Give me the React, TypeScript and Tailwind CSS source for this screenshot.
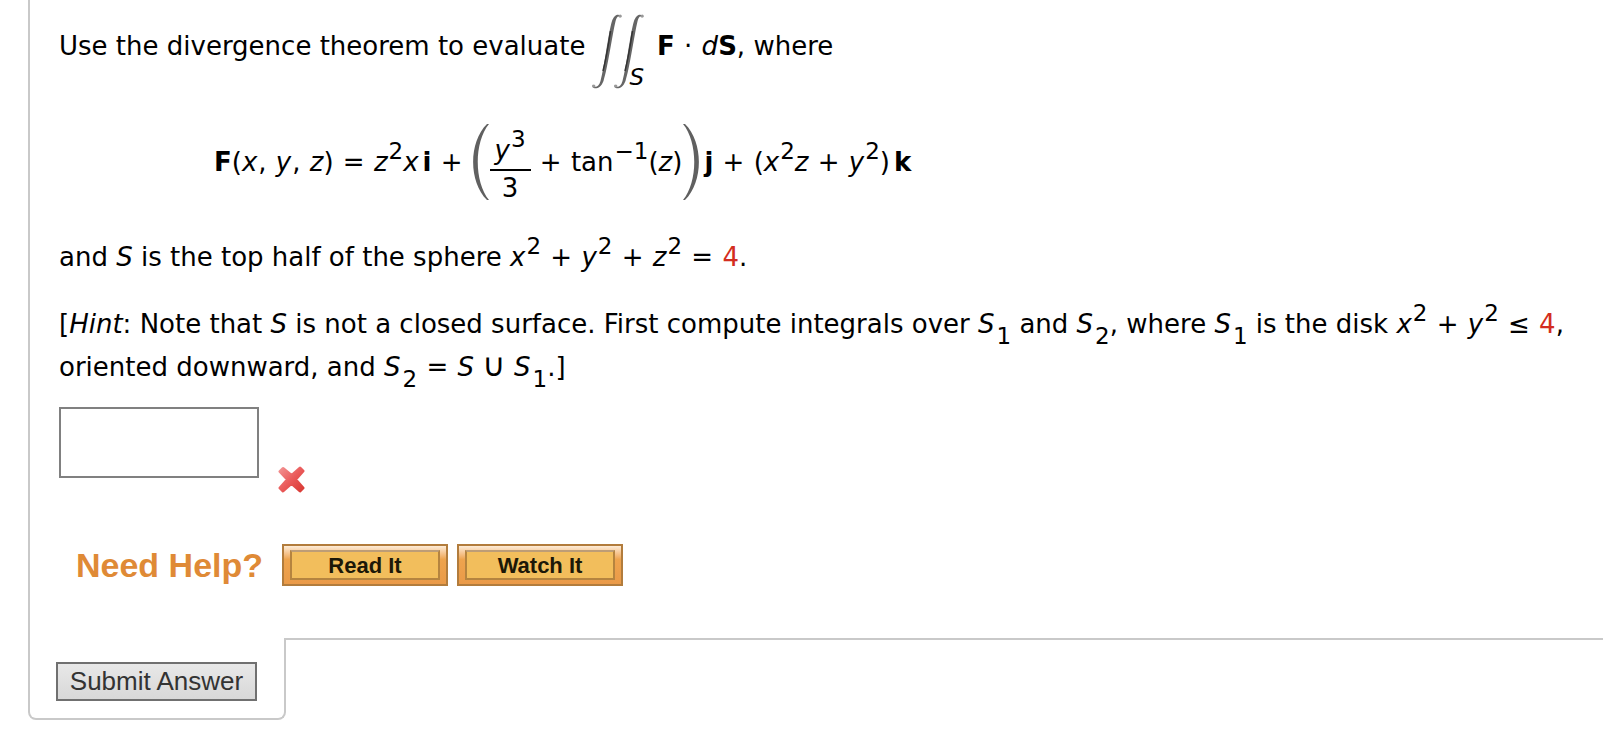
import type { ReactNode } from "react";

function Sup({ children }: { children: ReactNode }) {
  return <sup className="top-0 ml-px align-[12px] text-[23px] leading-[0]">{children}</sup>;
}

function Sub({ children }: { children: ReactNode }) {
  return <sub className="bottom-0 ml-[2px] align-[-11px] text-[23px] leading-[0]">{children}</sub>;
}

function Op({ children }: { children: ReactNode }) {
  return <span className="mx-px">{children}</span>;
}

function Comma() {
  return <span className="mx-px">,</span>;
}

function Given({ children }: { children: ReactNode }) {
  return <span className="text-[#d32d20]">{children}</span>;
}

function IntegralSign() {
  return (
    <svg width="30" height="76" viewBox="0 0 30 76" fill="none" aria-hidden="true">
      <path
        d="M0.5 71.500C2 75 6.500 75 8.500 68C12 56 16.500 19 20 8C22.500 0.500 27.500 0.500 29.500 3.500L28 4.500C26 2.500 24.800 4 23.600 8C20 23 15.800 55 11.500 68C8.500 76 2.500 76.500 0.500 74Z"
        fill="#666"
      />
      <path d="M18.500 18C17 28 14 46 11 58" stroke="#333" strokeWidth="1.5" />
      <circle cx="1.8" cy="73" r="1.6" fill="#999" />
      <circle cx="28.2" cy="3" r="1.6" fill="#999" />
    </svg>
  );
}

function Paren({ flip = false }: { flip?: boolean }) {
  return (
    <svg
      width="17"
      height="78"
      viewBox="0 0 17 78"
      className={flip ? "-scale-x-100" : ""}
      aria-hidden="true"
    >
      <path d="M15 1C-3.500 19 -3.500 59 15 77L17 77C2 59 2 19 17 1Z" fill="#606060" />
    </svg>
  );
}

function WrongMark() {
  return (
    <svg width="27" height="27" viewBox="0 0 27 27" role="img" aria-label="Incorrect">
      <defs>
        <linearGradient id="wrong" x1="0" y1="0" x2="1" y2="1">
          <stop offset="0" stopColor="#f29090" />
          <stop offset="0.5" stopColor="#ea5a5a" />
          <stop offset="1" stopColor="#d93a34" />
        </linearGradient>
      </defs>
      <path
        d="M5 2.500L13.500 9.500L22 2L25 5L17.500 13.500L25 22L22 25L13.500 17.500L5 25L2 22L9.500 13.500L2 5.500Z"
        fill="url(#wrong)"
        stroke="url(#wrong)"
        strokeWidth="3"
        strokeLinejoin="round"
      />
    </svg>
  );
}

function HelpButton({ children }: { children: ReactNode }) {
  return (
    <button
      type="button"
      className="flex h-[42px] w-[166px] border-2 border-[#b27c3c] bg-linear-to-b from-[#fdebd5] via-[#eea44e] via-35% to-[#ea9a48] px-[6px] pt-1 pb-[4px]"
    >
      <span className="flex h-full w-full items-center justify-center border-2 border-[#b5843f] border-t-[#bd9d76] bg-[#f2be5c] pt-[2px] font-['Liberation_Sans',Arial,sans-serif] text-[22px] leading-none font-bold text-[#1c1808]">
        {children}
      </span>
    </button>
  );
}

export default function App() {
  return (
    <div className="min-h-screen bg-white pl-7 font-['DejaVu_Sans',Verdana,sans-serif] text-[26px] leading-[43px] text-black">
      <main className="border-l-2 border-[#c9c9c9] pl-[29px]">
        <div className="flex h-[101px] items-center whitespace-pre">
          <span className="pb-[9px]">Use the divergence theorem to evaluate</span>
          <span className="ml-[7px] flex items-end">
            <IntegralSign />
            <span className="-ml-2">
              <IntegralSign />
            </span>
            <i className="-ml-[15px] text-[23px] leading-[23px]">S</i>
          </span>
          <span className="ml-[13px] pb-[9px]">
            <b>F</b> <Op>·</Op> <i>d</i>
            <b>S</b>, where
          </span>
        </div>

        <div className="mt-[10px] ml-[155px] flex h-[102px] items-center whitespace-pre">
          <span>
            <b>F</b>(<i>x</i>
            <Comma /> <i>y</i>
            <Comma /> <i>z</i>) <Op>=</Op> <i>z</i>
            <Sup>2</Sup>
            <i>x</i>
            <b className="ml-1">i</b> <Op>+</Op>
          </span>
          <span className="ml-2 flex">
            <Paren />
          </span>
          <span className="ml-px flex w-[41px] flex-col text-center">
            <span className="border-b-2 border-black pt-4 pb-1 leading-[30px]">
              <i>y</i>
              <Sup>3</Sup>
            </span>
            <span className="leading-[34px]">3</span>
          </span>
          <span>
            {" "}
            <Op>+</Op> tan<Sup>−1</Sup>(<i>z</i>)
          </span>
          <span className="ml-px flex">
            <Paren flip />
          </span>
          <span className="ml-1">
            <b>j</b> <Op>+</Op> (<i>x</i>
            <Sup>2</Sup>
            <i>z</i> <Op>+</Op> <i>y</i>
            <Sup>2</Sup>)<b className="ml-1">k</b>
          </span>
        </div>

        <p className="mt-[23px]">
          and <i>S</i> is the top half of the sphere <i>x</i>
          <Sup>2</Sup> <Op>+</Op> <i>y</i>
          <Sup>2</Sup> <Op>+</Op> <i>z</i>
          <Sup>2</Sup> <Op>=</Op> <Given>4</Given>.
        </p>

        <p className="mt-6">
          [<i>Hint</i>: Note that <i>S</i> is not a closed surface. First compute integrals over{" "}
          <i>S</i>
          <Sub>1</Sub> and <i>S</i>
          <Sub>2</Sub>, where <i>S</i>
          <Sub>1</Sub> is the disk <i>x</i>
          <Sup>2</Sup> <Op>+</Op> <i>y</i>
          <Sup>2</Sup> <Op>≤</Op> <Given>4</Given>
          <span>,</span> <span>oriented downward, and </span>
          <i>S</i>
          <Sub>2</Sub> <Op>=</Op> <i>S</i> <span className="text-[32px] leading-[0]">∪</span> <i>S</i>
          <Sub>1</Sub>.]
        </p>

        <div className="mt-[18px] flex h-[86px] items-end gap-[19px]">
          <input
            type="text"
            aria-label="Answer"
            className="h-[71px] w-[200px] self-start border-2 border-[#808080] bg-white px-2"
          />
          <WrongMark />
        </div>

        <div className="mt-[51px] flex items-center pb-[52px] pl-[17px] font-['Liberation_Sans',Arial,sans-serif]">
          <span className="w-[206px] text-[34px] leading-[42px] font-bold text-[#df8a36]">Need Help?</span>
          <div className="flex gap-[9px]">
            <HelpButton>Read It</HelpButton>
            <HelpButton>Watch It</HelpButton>
          </div>
        </div>
      </main>

      <footer className="flex items-start">
        <div className="flex h-[82px] w-[258px] items-center rounded-b-lg border-x-2 border-b-2 border-[#c9c9c9] pt-[6px] pl-[26px]">
          <button
            type="button"
            className="h-[39px] w-[201px] border-2 border-[#707070] bg-linear-to-b from-[#e8e8e8] to-[#d8d8d8] font-['Liberation_Sans',Arial,sans-serif] text-[26px] leading-[34px] text-[#333]"
          >
            Submit Answer
          </button>
        </div>
        <div className="-ml-[2px] flex-1 border-t-2 border-[#c9c9c9]" />
      </footer>
    </div>
  );
}
